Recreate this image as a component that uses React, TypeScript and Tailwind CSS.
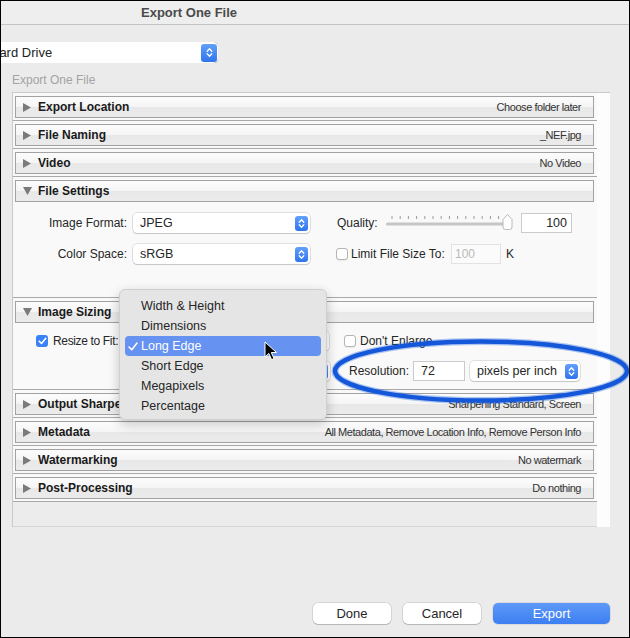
import React from "react";

function Stepper({ big }: { big?: boolean }) {
  return (
    <span
      className={
        "flex shrink-0 items-center justify-center rounded-[3px] bg-[linear-gradient(to_bottom,#62a0f9,#2f74ee)] " +
        (big ? "h-[18px] w-[16px]" : "h-[15px] w-[13px]")
      }
    >
      <svg width="7" height="11" viewBox="0 0 7 11">
        <path
          d="M1.2 4.2 L3.5 1.8 L5.8 4.2 M1.2 6.8 L3.5 9.2 L5.8 6.8"
          stroke="white"
          strokeWidth="1.3"
          fill="none"
          strokeLinecap="round"
          strokeLinejoin="round"
        />
      </svg>
    </span>
  );
}

function Select({ value, className }: { value?: string; className: string }) {
  return (
    <div
      className={
        "flex h-[20px] shrink-0 items-center justify-between rounded-[4px] bg-white pl-[7px] pr-[2px] text-[12.5px] text-[#262626] shadow-[0_0_0_0.5px_rgba(0,0,0,0.2),0_1px_1px_rgba(0,0,0,0.12)] " +
        className
      }
    >
      <span className="whitespace-nowrap">{value}</span>
      <Stepper />
    </div>
  );
}

function Check({ on }: { on?: boolean }) {
  return on ? (
    <span className="flex h-[12px] w-[12px] shrink-0 items-center justify-center rounded-[3px] bg-[#3a82f7]">
      <svg width="9" height="8" viewBox="0 0 9 8">
        <path d="M1.2 4.2 L3.5 6.5 L7.8 1.3" stroke="white" strokeWidth="1.6" fill="none" strokeLinecap="round" strokeLinejoin="round" />
      </svg>
    </span>
  ) : (
    <span className="block h-[12px] w-[12px] shrink-0 rounded-[3px] border border-[#b4b4b4] bg-white shadow-[0_1px_1px_rgba(0,0,0,0.06)]" />
  );
}

function Tri({ open }: { open?: boolean }) {
  return open ? (
    <svg width="9" height="8" viewBox="0 0 9 8">
      <path d="M0 0H9L4.5 8Z" fill="#7a7a7a" />
    </svg>
  ) : (
    <svg width="8" height="9" viewBox="0 0 8 9">
      <path d="M0 0L8 4.5L0 9Z" fill="#7a7a7a" />
    </svg>
  );
}

function Section({
  title,
  summary,
  open,
  children,
}: {
  title: string;
  summary?: string;
  open?: boolean;
  children?: React.ReactNode;
}) {
  return (
    <div className="border-b border-[#a9a9a9] bg-[#f9f9f9]">
      <div className="pb-[2px] pl-[2px] pr-[3px] pt-[3px]">
        <div className="flex h-[22px] items-center border border-[#a2a2a2] bg-[linear-gradient(to_bottom,#fcfcfc_0%,#f5f5f5_50%,#e8e8e8_50%,#ebebeb_100%)] pl-[7px] pr-[12px]">
          <span className="flex w-[9px] justify-start">
            <Tri open={open} />
          </span>
          <span className="ml-[6px] whitespace-nowrap text-[12px] font-bold text-[#1a1a1a]">{title}</span>
          {summary && (
            <span className="ml-auto whitespace-nowrap text-[11px] tracking-[-0.45px] text-[#333]">{summary}</span>
          )}
        </div>
      </div>
      {children}
    </div>
  );
}

function Slider() {
  const ticks = Array.from({ length: 15 }, (_, i) => 6 + i * 8.2);
  return (
    <svg width="127" height="20" viewBox="0 0 127 20" className="shrink-0">
      {ticks.map((x, i) => (
        <line key={i} x1={x} y1="3" x2={x} y2="6" stroke="#9a9a9a" strokeWidth="1" />
      ))}
      <rect x="0" y="9.5" width="124" height="3" rx="1.5" fill="#c6c6c6" />
      <path
        d="M121.5 1.5 L126 6.5 L126 14 Q126 16.5 123.5 16.5 L119.5 16.5 Q117 16.5 117 14 L117 6.5 Z"
        fill="white"
        stroke="#a8a8a8"
        strokeWidth="0.8"
      />
    </svg>
  );
}

const menuItems = ["Width & Height", "Dimensions", "Long Edge", "Short Edge", "Megapixels", "Percentage"];

export default function App() {
  return (
    <div className="relative flex h-[638px] w-[630px] flex-col overflow-hidden border border-black bg-[#ebebeb] font-['Liberation_Sans',Arial,sans-serif] text-[#262626]">
      {/* title bar */}
      <div className="flex h-[24px] shrink-0 items-center border-b border-[#c4c4c4] bg-[#eeeeee] pl-[140px]">
        <span className="text-[13px] font-bold text-[#4a4a4a]">Export One File</span>
      </div>

      {/* export to */}
      <div className="mt-[17px] h-[21px] w-[217px] shrink-0 overflow-hidden">
        <div className="-ml-[40px] flex h-[21px] w-[257px] items-center justify-between rounded-[5px] bg-white pl-[29px] pr-[1px] text-[13px] text-[#222] shadow-[0_0_0_0.5px_rgba(0,0,0,0.2),0_1px_1px_rgba(0,0,0,0.12)]">
          <span>Hard Drive</span>
          <Stepper big />
        </div>
      </div>

      <div className="ml-[11px] mt-[10px] h-[14px] text-[12px] leading-[14px] text-[#a3a3a3]">Export One File</div>

      {/* panel */}
      <div className="ml-[11px] mt-[5px] flex h-[435px] w-[598px] shrink-0 border-l border-t border-[#c9c9c9]">
        <div className="flex w-[584px] flex-col border-b border-[#d6d6d6] bg-[#ececec]">
          <Section title="Export Location" summary="Choose folder later" />
          <Section title="File Naming" summary="_NEF.jpg" />
          <Section title="Video" summary="No Video" />
          <Section title="File Settings" open>
            <div className="flex h-[93px] flex-col gap-[11px] whitespace-nowrap pt-[9px] text-[12px]">
              <div className="flex h-[20px] items-center">
                <span className="w-[114px] shrink-0 text-right">Image Format:</span>
                <Select value="JPEG" className="ml-[6px] w-[177px]" />
                <span className="ml-[27px] w-[49px] shrink-0">Quality:</span>
                <Slider />
                <div className="ml-[8px] flex h-[20px] w-[51px] shrink-0 items-center justify-end border border-[#cacaca] bg-white pr-[4px] text-[12.5px]">
                  100
                </div>
              </div>
              <div className="flex h-[20px] items-center">
                <span className="w-[114px] shrink-0 text-right">Color Space:</span>
                <Select value="sRGB" className="ml-[6px] w-[177px]" />
                <span className="ml-[26px]">
                  <Check />
                </span>
                <span className="ml-[3px] w-[100px] shrink-0">Limit File Size To:</span>
                <div className="flex h-[20px] w-[50px] shrink-0 items-center border border-[#e2e2e2] bg-[#fbfbfb] pl-[3px] text-[#b9b9b9]">
                  100
                </div>
                <span className="ml-[5px]">K</span>
              </div>
            </div>
          </Section>
          <Section title="Image Sizing" open>
            <div className="flex h-[64px] flex-col gap-[10px] whitespace-nowrap pt-[6px] text-[12px]">
              <div className="flex h-[20px] items-center">
                <span className="ml-[23px]">
                  <Check on />
                </span>
                <span className="ml-[5px] w-[68px] shrink-0 tracking-[-0.35px]">Resize to Fit:</span>
                {/* select hidden under the open menu */}
                <Select className="w-[208px]" />
                <span className="ml-[15px]">
                  <Check />
                </span>
                <span className="ml-[4px]">Don't Enlarge</span>
              </div>
              <div className="flex h-[20px] items-center">
                <div className="ml-[109px] flex h-[20px] w-[60px] shrink-0 items-center justify-end border border-[#cacaca] bg-white pr-[4px]" />
                <Select className="ml-[6px] w-[142px]" />
                <span className="ml-[19px] w-[64px] shrink-0">Resolution:</span>
                <div className="flex h-[20px] w-[52px] shrink-0 items-center border border-[#cacaca] bg-white pl-[7px] text-[12.5px]">
                  72
                </div>
                <Select value="pixels per inch" className="ml-[5px] w-[110px]" />
              </div>
            </div>
          </Section>
          <Section title="Output Sharpening" summary="Sharpening Standard, Screen" />
          <Section title="Metadata" summary="All Metadata, Remove Location Info, Remove Person Info" />
          <Section title="Watermarking" summary="No watermark" />
          <Section title="Post-Processing" summary="Do nothing" />
        </div>
        <div className="flex-1 bg-[#fdfdfd]" />
      </div>

      {/* buttons */}
      <div className="mt-[76px] flex justify-end gap-[12px] pr-[19px] text-[13px]">
        <button className="h-[21px] w-[78px] rounded-[5px] bg-white text-[#262626] shadow-[0_0_0_0.5px_rgba(0,0,0,0.18),0_1px_1px_rgba(0,0,0,0.15)]">
          Done
        </button>
        <button className="h-[21px] w-[78px] rounded-[5px] bg-white text-[#262626] shadow-[0_0_0_0.5px_rgba(0,0,0,0.18),0_1px_1px_rgba(0,0,0,0.15)]">
          Cancel
        </button>
        <button className="h-[21px] w-[117px] rounded-[5px] bg-[linear-gradient(to_bottom,#5d99f7,#3d7ff2)] text-white shadow-[0_0_0_0.5px_rgba(0,0,80,0.15)]">
          Export
        </button>
      </div>

      {/* popup menu */}
      <div className="absolute left-[118px] top-[288px] w-[208px] rounded-[6px] border border-[#cfcfcf] bg-[#e5e5e5] pb-[3px] pt-[6px] shadow-[0_4px_12px_rgba(0,0,0,0.22)]">
        {menuItems.map((item) =>
          item === "Long Edge" ? (
            <div key={item} className="mx-[5px] flex h-[20px] items-center rounded-[4px] bg-[#6692f1] text-[12.5px] text-white">
              <svg width="10" height="9" viewBox="0 0 10 9" className="ml-[3px]">
                <path d="M1 5 L3.8 7.8 L9 1" stroke="white" strokeWidth="1.5" fill="none" strokeLinecap="round" strokeLinejoin="round" />
              </svg>
              <span className="ml-[3px]">{item}</span>
            </div>
          ) : (
            <div key={item} className="flex h-[20px] items-center pl-[21px] text-[12.5px] text-[#262626]">
              {item}
            </div>
          )
        )}
      </div>

      {/* annotation + cursor */}
      <svg className="pointer-events-none absolute left-0 top-0" width="630" height="638" viewBox="1 1 630 638">
        <ellipse cx="481" cy="371" rx="146" ry="29.5" fill="none" stroke="#1f63e0" strokeOpacity="0.35" strokeWidth="7" />
        <ellipse cx="481" cy="371" rx="146" ry="29.5" fill="none" stroke="#1557d9" strokeWidth="4.5" />
        <path
          d="M265 342 L265 357 L268.8 353.4 L271.6 359.6 L274 358.6 L271.3 352.5 L276.5 352.5 Z"
          fill="black"
          stroke="white"
          strokeWidth="1"
          strokeLinejoin="round"
        />
      </svg>
    </div>
  );
}
